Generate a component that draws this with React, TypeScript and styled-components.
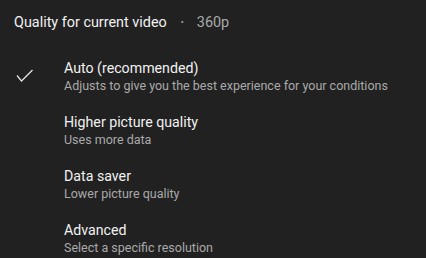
import React from 'react'
import styled, { createGlobalStyle } from 'styled-components'

const GlobalStyle = createGlobalStyle`
  html, body {
    margin: 0;
    padding: 0;
    background: #212121;
  }
`

const options = [
  { title: 'Auto (recommended)', subtitle: 'Adjusts to give you the best experience for your conditions', selected: true },
  { title: 'Higher picture quality', subtitle: 'Uses more data' },
  { title: 'Data saver', subtitle: 'Lower picture quality' },
  { title: 'Advanced', subtitle: 'Select a specific resolution' },
]

const App = () => (
  <Sheet>
    <GlobalStyle />
    <Header>
      <HeaderTitle>Quality for current video</HeaderTitle>
      <Dot>•</Dot>
      <Current>360p</Current>
    </Header>
    <List>
      {options.map((o) => (
        <Item key={o.title}>
          <CheckSlot>
            {o.selected && (
              <svg width="18" height="14" viewBox="0 0 18 14" fill="none">
                <path d="M1 6.5 L5.5 12 L16.5 1" stroke="#e8e8e8" strokeWidth="1.2" />
              </svg>
            )}
          </CheckSlot>
          <Texts>
            <Title>{o.title}</Title>
            <Subtitle>{o.subtitle}</Subtitle>
          </Texts>
        </Item>
      ))}
    </List>
  </Sheet>
)

export default App

const Sheet = styled.div`
  width: 426px;
  height: 258px;
  overflow: hidden;
  background: #212121;
  font-family: Roboto, 'Noto Sans', sans-serif;
`

const Header = styled.div`
  display: flex;
  align-items: center;
  height: 44px;
  padding: 0 14px;
  font-size: 14.4px;
`

const HeaderTitle = styled.span`
  color: #f1f1f1;
`

const Dot = styled.span`
  color: #aaaaaa;
  font-size: 9px;
  margin: 0 13px 0 14px;
`

const Current = styled.span`
  color: #aaaaaa;
`

const List = styled.div`
  display: flex;
  flex-direction: column;
  padding-top: 5px;
`

const Item = styled.div`
  display: flex;
  align-items: center;
  height: 54px;
`

const CheckSlot = styled.div`
  width: 64px;
  display: flex;
  padding-left: 16px;
  box-sizing: border-box;
`

const Texts = styled.div`
  display: flex;
  flex-direction: column;
`

const Title = styled.div`
  color: #f1f1f1;
  font-size: 14.2px;
  line-height: 19px;
`

const Subtitle = styled.div`
  color: #aaaaaa;
  font-size: 12.5px;
  line-height: 16px;
`
